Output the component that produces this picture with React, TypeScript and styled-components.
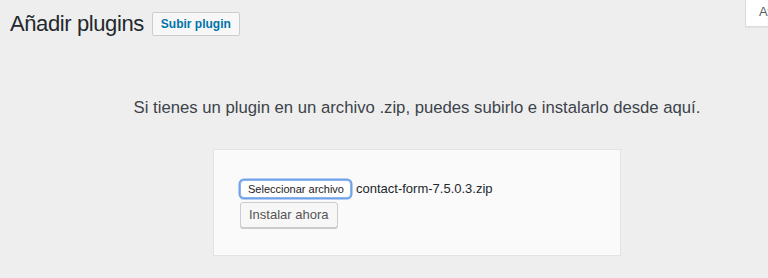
import React from "react";
import styled, { createGlobalStyle } from "styled-components";

const Global = createGlobalStyle`
  html, body { margin: 0; padding: 0; background: #eeeeee; }
  body { font-family: "Liberation Sans", Arial, sans-serif; overflow: hidden; }
`;

const Page = styled.div`
  position: relative;
  width: 768px;
  height: 278px;
  background: #eeeeee;
`;

const HelpTab = styled.div`
  position: absolute;
  top: 0;
  right: 0;
  width: 23px;
  height: 27px;
  background: #ffffff;
  border-left: 1px solid #dcdcdc;
  border-bottom: 1px solid #dcdcdc;
  box-shadow: 0 1px 1px rgba(0,0,0,0.04);
  overflow: hidden;
  padding-left: 13px;
  box-sizing: border-box;
  font-size: 13px;
  line-height: 24px;
  color: #555d66;
  white-space: nowrap;
`;

const Header = styled.div`
  display: flex;
  align-items: center;
  padding: 10px 0 0 10px;
`;

const Title = styled.h1`
  margin: 0;
  font-size: 22px;
  letter-spacing: -0.4px;
  font-weight: 400;
  line-height: 27px;
  color: #23282d;
`;

const PageAction = styled.button`
  margin-left: 8px;
  height: 24px;
  padding: 0 8px;
  border: 1px solid #cccccc;
  border-radius: 2px;
  background: #f7f7f7;
  color: #0073aa;
  font-family: "Liberation Sans", Arial, sans-serif;
  font-size: 12px;
  font-weight: 700;
  line-height: 22px;
  box-sizing: border-box;
`;

const Content = styled.div`
  padding-left: 66px;
  padding-top: 61px;
`;

const HelpText = styled.p`
  margin: 0;
  text-align: center;
  font-size: 16.7px;
  line-height: 20px;
  color: #3c434a;
`;

const UploadBox = styled.div`
  width: 408px;
  height: 107px;
  margin: 31px auto 0;
  box-sizing: border-box;
  background: #fafafa;
  border: 1px solid #e3e3e3;
  padding: 30px 0 0 26px;
  display: flex;
  flex-direction: column;
  align-items: flex-start;
  gap: 4px;
`;

const FileRow = styled.div`
  display: flex;
  align-items: center;
  gap: 5px;
`;

const ChooseButton = styled.button`
  height: 18px;
  padding: 0 6px 0 7px;
  box-sizing: border-box;
  background: #ffffff;
  border: 1px solid #8fb3e6;
  border-radius: 4px;
  box-shadow: 0 0 0 1.5px #6fa2ec;
  font-family: "Liberation Sans", Arial, sans-serif;
  font-size: 11px;
  line-height: 16px;
  color: #222222;
`;

const FileName = styled.span`
  font-size: 13px;
  color: #23282d;
  line-height: 18px;
`;

const InstallButton = styled.button`
  height: 26px;
  padding: 0 8px;
  box-sizing: border-box;
  background: #f7f7f7;
  border: 1px solid #cccccc;
  border-radius: 3px;
  box-shadow: 0 1px 0 #cccccc;
  font-family: "Liberation Sans", Arial, sans-serif;
  font-size: 13px;
  line-height: 24px;
  color: #555555;
`;

export default function App() {
  return (
    <Page>
      <Global />
      <HelpTab>Ayuda</HelpTab>
      <Header>
        <Title>Añadir plugins</Title>
        <PageAction>Subir plugin</PageAction>
      </Header>
      <Content>
        <HelpText>
          Si tienes un plugin en un archivo .zip, puedes subirlo e instalarlo desde aquí.
        </HelpText>
        <UploadBox>
          <FileRow>
            <ChooseButton>Seleccionar archivo</ChooseButton>
            <FileName>contact-form-7.5.0.3.zip</FileName>
          </FileRow>
          <InstallButton>Instalar ahora</InstallButton>
        </UploadBox>
      </Content>
    </Page>
  );
}
